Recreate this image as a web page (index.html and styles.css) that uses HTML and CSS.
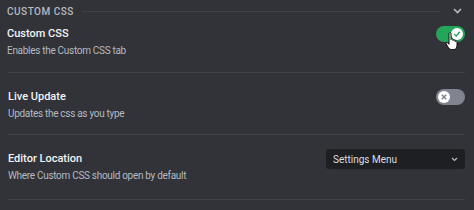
FILE: index.html
```html
<!DOCTYPE html>
<html lang="en">
<head>
    <meta charset="UTF-8">
    <meta name="viewport" content="width=device-width, initial-scale=1.0">
    <title>Custom CSS</title>
    <link rel="stylesheet" href="styles.css">
</head>
<body>
    <div id="settings">
        <div class="section-header">
            <span class="section-title">Custom CSS</span>
            <span class="section-line"></span>
            <svg class="section-chevron" width="9" height="6" viewBox="0 0 9 6">
                <path d="M1 1 L4.5 4.5 L8 1" fill="none" stroke="#b5bac1" stroke-width="1.6"/>
            </svg>
        </div>

        <div class="row first">
            <div class="row-text">
                <div class="row-title">Custom CSS</div>
                <div class="row-desc">Enables the Custom CSS tab</div>
            </div>
            <div class="toggle-wrap">
                <div class="toggle on">
                    <span class="knob">
                        <svg width="8" height="8" viewBox="0 0 8 8">
                            <path d="M1.2 4.2 L3.2 6 L6.8 1.8" fill="none" stroke="#23a55a" stroke-width="1.4"/>
                        </svg>
                    </span>
                </div>
                <div class="hand">
                    <svg width="14" height="19" viewBox="0 0 14 19">
                        <path d="M4 1.5 C4 0.5 6 0.5 6 1.5 L6 7.5 C6 6.5 8 6.5 8 7.5 L8 8.5 C8 7.5 10 7.5 10 8.5 L10 9.5 C10 8.5 12 8.5 12 9.5 L12 13 C12 15.5 10.8 17.5 9 17.5 L6.2 17.5 C4.8 17.5 3.8 16.2 2.8 14.6 L1.2 12 C0.6 11 1.8 10 2.6 10.8 L4 12.3 Z" fill="#ffffff" stroke="#111111" stroke-width="1"/>
                    </svg>
                </div>
            </div>
        </div>

        <div class="row">
            <div class="row-text">
                <div class="row-title">Live Update</div>
                <div class="row-desc">Updates the css as you type</div>
            </div>
            <div class="toggle off">
                <span class="knob">
                    <svg width="8" height="8" viewBox="0 0 8 8">
                        <path d="M1.8 1.8 L6.2 6.2 M6.2 1.8 L1.8 6.2" fill="none" stroke="#80848e" stroke-width="1.5"/>
                    </svg>
                </span>
            </div>
        </div>

        <div class="row last">
            <div class="row-text">
                <div class="row-title">Editor Location</div>
                <div class="row-desc">Where Custom CSS should open by default</div>
            </div>
            <div class="select">
                <span>Settings Menu</span>
                <svg width="7" height="5" viewBox="0 0 7 5">
                    <path d="M1 1 L3.5 3.5 L6 1" fill="none" stroke="#b5bac1" stroke-width="1.2"/>
                </svg>
            </div>
        </div>
    </div>
</body>
</html>
```

FILE: styles.css
```css
body {
    margin: 0;
    background-color: #313338;
    font-family: Roboto, "Noto Sans", Arial, sans-serif;
}
#settings {
    padding: 0 9px 0 7px;
}
.section-header {
    display: flex;
    align-items: center;
    height: 22px;
    gap: 8px;
}
.section-title {
    font-size: 10px;
    font-weight: 500;
    text-transform: uppercase;
    color: #b5bac1;
    letter-spacing: 0.5px;
}
.section-line {
    flex: 1;
    height: 1px;
    background-color: #3f4147;
}
.section-chevron {
    margin: 0 3px 0 4px;
}
.row {
    display: flex;
    justify-content: space-between;
    align-items: flex-start;
    padding: 16px 0 13px 0;
    border-top: 1px solid #3f4147;
    margin-left: 1px;
}
.row.first {
    border-top: none;
    padding-top: 4px;
    padding-bottom: 14px;
    margin-left: 0;
}
.row.last {
    padding-bottom: 16px;
    border-bottom: 1px solid #3f4147;
}
.row-title {
    font-size: 11px;
    line-height: 16px;
    font-weight: 500;
    color: #f2f3f5;
}
.row-desc {
    margin-top: 2px;
    font-size: 10px;
    line-height: 14px;
    letter-spacing: -0.3px;
    color: #b5bac1;
}
.toggle-wrap {
    position: relative;
    width: 29px;
    height: 16px;
}
.toggle {
    width: 29px;
    height: 16px;
    border-radius: 8px;
    display: flex;
    align-items: center;
    padding: 0 2px;
    box-sizing: border-box;
}
.toggle.on {
    background-color: #23a55a;
    justify-content: flex-end;
}
.toggle.off {
    background-color: #80848e;
    justify-content: flex-start;
}
.knob {
    width: 12px;
    height: 12px;
    border-radius: 50%;
    background-color: #ffffff;
    display: flex;
    align-items: center;
    justify-content: center;
}
.hand {
    position: absolute;
    left: 9px;
    top: 6px;
    width: 14px;
    height: 19px;
    z-index: 5;
    line-height: 0;
}
.select {
    width: 139px;
    height: 20px;
    margin-top: -2px;
    box-sizing: border-box;
    display: flex;
    align-items: center;
    justify-content: space-between;
    padding: 0 7px;
    background-color: #1e1f22;
    border-radius: 3px;
    font-size: 10px;
    color: #dbdee1;
}
```
